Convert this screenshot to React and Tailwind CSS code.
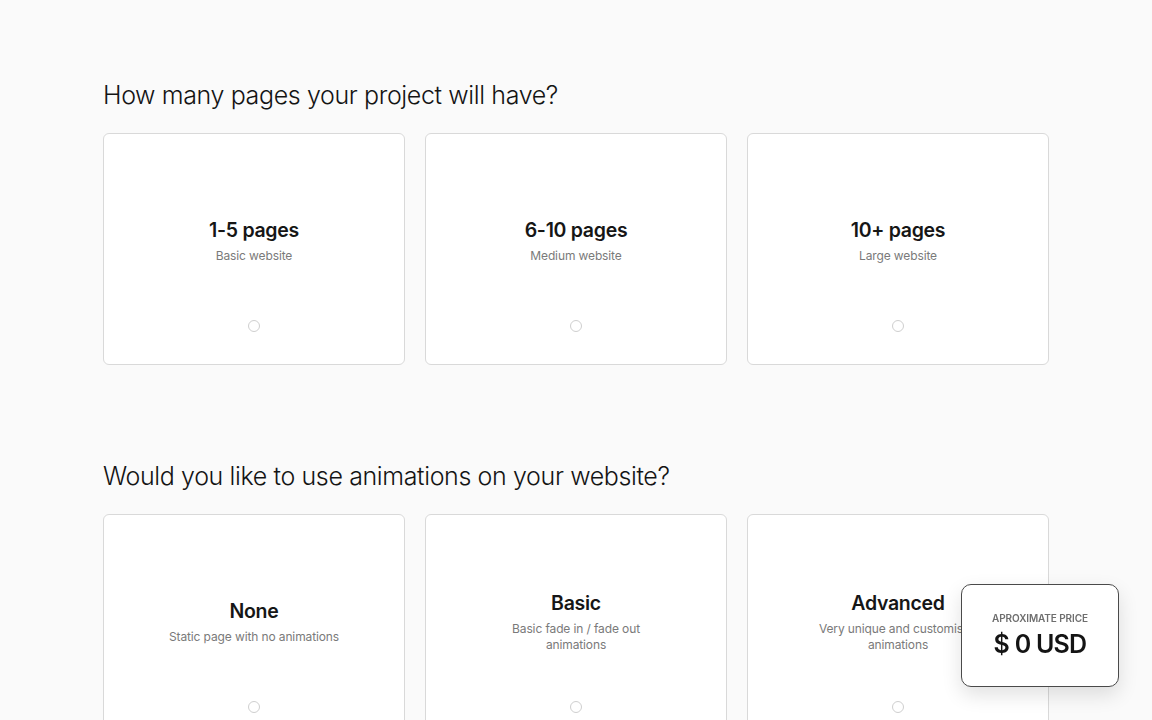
import React from 'react'

const sections = [
  {
    question: 'How many pages your project will have?',
    options: [
      { title: '1-5 pages', desc: 'Basic website' },
      { title: '6-10 pages', desc: 'Medium website' },
      { title: '10+ pages', desc: 'Large website' },
    ],
  },
  {
    question: 'Would you like to use animations on your website?',
    options: [
      { title: 'None', desc: 'Static page with no animations' },
      { title: 'Basic', desc: 'Basic fade in / fade out animations' },
      { title: 'Advanced', desc: 'Very unique and customised animations' },
    ],
  },
]

function OptionCard({ title, desc }) {
  return (
    <button
      type="button"
      className="flex h-[232px] flex-col items-center rounded-[6px] border border-[#d9d9d9] bg-white px-6 pb-8 pt-8 text-center"
    >
      <div className="mb-[6px] flex w-full flex-1 flex-col items-center justify-center">
        <h3 className="text-[19.5px] font-semibold leading-7 tracking-[-0.015em] text-[#161616]">
          {title}
        </h3>
        <p className="mt-[4px] max-w-[176px] text-[12px] leading-4 tracking-[-0.01em] text-[#7a7a7a]">
          {desc}
        </p>
      </div>
      <span className="h-3 w-3 rounded-full border border-[#cfcfcf] bg-white" />
    </button>
  )
}

export default function App() {
  return (
    <div
      className="relative min-h-screen overflow-hidden bg-[#fafafa]"
      style={{ fontFamily: 'Inter, "Noto Sans", sans-serif' }}
    >
      <div className="mx-auto flex w-[946px] flex-col gap-[93px] pt-[77px]">
        {sections.map((section) => (
          <section key={section.question}>
            <h2 className="text-[25px] font-light leading-9 tracking-[-0.015em] text-[#141414]">
              {section.question}
            </h2>
            <div className="mt-5 grid grid-cols-3 gap-5">
              {section.options.map((opt) => (
                <OptionCard key={opt.title} {...opt} />
              ))}
            </div>
          </section>
        ))}
      </div>

      <div className="fixed bottom-[33px] right-[33px] flex h-[103px] w-[158px] flex-col items-center justify-center rounded-[10px] border border-[#4a4a4a] bg-white shadow-[0_8px_20px_rgba(0,0,0,0.12)]">
        <p className="text-[10px] font-semibold uppercase tracking-[-0.01em] text-[#6e6e6e]">
          Aproximate price
        </p>
        <p className="mt-[2px] text-[25px] font-semibold leading-8 tracking-[-0.03em] text-[#141414]">
          $ 0 USD
        </p>
      </div>
    </div>
  )
}
